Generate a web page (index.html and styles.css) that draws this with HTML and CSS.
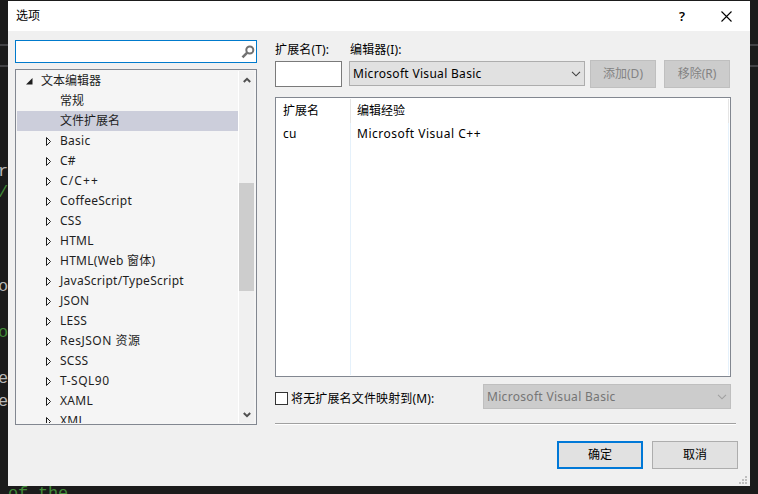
FILE: index.html
```html
<!DOCTYPE html>
<html lang="zh-CN">
<head>
<meta charset="utf-8">
<title>选项</title>
<link rel="stylesheet" href="styles.css">
</head>
<body>
<div class="desktop">
  <div class="editor">
    <div class="rule rule-top"></div>
    <div class="rule rule-bottom"></div>
    <span class="code c1">r</span>
    <span class="code c2 comment">/</span>
    <span class="code c3">o</span>
    <span class="code c4 comment">o</span>
    <span class="code c5">e</span>
    <span class="code c6">e</span>
    <span class="code c7 comment">of the</span>
  </div>
  <main class="dialog">
    <header class="titlebar">
      <span class="title">选项</span>
      <span class="help">?</span>
      <svg class="close" width="11" height="11" viewBox="0 0 11 11"><path d="M.5.5l10 10M10.500.500l-10 10"/></svg>
    </header>
    <div class="content">
      <aside class="left">
        <div class="search">
          <svg width="14" height="14" viewBox="0 0 14 14"><circle cx="8.800" cy="5" r="3.500"/><path d="M6.200 7.600L1.500 12.300"/></svg>
        </div>
        <div class="tree">
          <ul class="items">
            <li class="root"><svg width="7" height="7" viewBox="0 0 7 7"><path class="solid" d="M6.500 0v6.500H0z"/></svg><span class="cjk">文本编辑器</span></li>
            <li class="leaf"><span class="cjk">常规</span></li>
            <li class="leaf selected"><span class="cjk">文件扩展名</span></li>
            <li><svg width="6" height="9" viewBox="0 0 6 9"><path d="M.5.5v8l4-4z"/></svg><span>Basic</span></li>
            <li><svg width="6" height="9" viewBox="0 0 6 9"><path d="M.5.5v8l4-4z"/></svg><span>C#</span></li>
            <li><svg width="6" height="9" viewBox="0 0 6 9"><path d="M.5.5v8l4-4z"/></svg><span class="wide">C/C++</span></li>
            <li><svg width="6" height="9" viewBox="0 0 6 9"><path d="M.5.5v8l4-4z"/></svg><span>CoffeeScript</span></li>
            <li><svg width="6" height="9" viewBox="0 0 6 9"><path d="M.5.5v8l4-4z"/></svg><span>CSS</span></li>
            <li><svg width="6" height="9" viewBox="0 0 6 9"><path d="M.5.5v8l4-4z"/></svg><span>HTML</span></li>
            <li><svg width="6" height="9" viewBox="0 0 6 9"><path d="M.5.5v8l4-4z"/></svg><span>HTML(Web 窗体)</span></li>
            <li><svg width="6" height="9" viewBox="0 0 6 9"><path d="M.5.5v8l4-4z"/></svg><span>JavaScript/TypeScript</span></li>
            <li><svg width="6" height="9" viewBox="0 0 6 9"><path d="M.5.5v8l4-4z"/></svg><span>JSON</span></li>
            <li><svg width="6" height="9" viewBox="0 0 6 9"><path d="M.5.5v8l4-4z"/></svg><span>LESS</span></li>
            <li><svg width="6" height="9" viewBox="0 0 6 9"><path d="M.5.5v8l4-4z"/></svg><span class="medium">ResJSON 资源</span></li>
            <li><svg width="6" height="9" viewBox="0 0 6 9"><path d="M.5.5v8l4-4z"/></svg><span>SCSS</span></li>
            <li><svg width="6" height="9" viewBox="0 0 6 9"><path d="M.5.5v8l4-4z"/></svg><span class="medium">T-SQL90</span></li>
            <li><svg width="6" height="9" viewBox="0 0 6 9"><path d="M.5.5v8l4-4z"/></svg><span>XAML</span></li>
            <li><svg width="6" height="9" viewBox="0 0 6 9"><path d="M.5.5v8l4-4z"/></svg><span>XML</span></li>
          </ul>
          <div class="scrollbar">
            <svg class="arrow" width="8" height="6" viewBox="0 0 8 6"><path d="M.8 5L4 1.800 7.200 5"/></svg>
            <div class="thumb"></div>
            <svg class="arrow down" width="8" height="6" viewBox="0 0 8 6"><path d="M.8 1L4 4.200 7.200 1"/></svg>
          </div>
        </div>
      </aside>
      <section class="right">
        <div class="labels"><span>扩展名(T):</span><span>编辑器(I):</span></div>
        <div class="fields">
          <div class="input"></div>
          <div class="select"><span>Microsoft Visual Basic</span><svg width="10" height="6" viewBox="0 0 10 6"><path d="M1 .8l4 4 4-4"/></svg></div>
          <div class="button small disabled add">添加(D)</div>
          <div class="button small disabled">移除(R)</div>
        </div>
        <div class="list">
          <div class="column ext"><div class="head">扩展名</div><div class="cell">cu</div></div>
          <div class="column exp"><div class="head">编辑经验</div><div class="cell medium">Microsoft Visual C++</div></div>
        </div>
        <div class="mapping">
          <div class="checkbox"></div>
          <span>将无扩展名文件映射到(M):</span>
          <div class="select disabled"><span>Microsoft Visual Basic</span><svg width="10" height="6" viewBox="0 0 10 6"><path d="M1 .8l4 4 4-4"/></svg></div>
        </div>
        <div class="separator"></div>
        <footer class="actions">
          <div class="button primary">确定</div>
          <div class="button">取消</div>
        </footer>
      </section>
    </div>
    <svg class="grip" width="8" height="8" viewBox="0 0 8 8"><path d="M6 0h2v2H6zM3 3h2v2H3zM6 3h2v2H6zM0 6h2v2H0zM3 6h2v2H3zM6 6h2v2H6z"/></svg>
  </main>
</div>
</body>
</html>
```
FILE: styles.css
```css
* { box-sizing: border-box; }
body {
  margin: 0;
  font: 12px/20px "Noto Sans", "Noto Sans CJK SC", sans-serif;
  color: #000;
}
svg { display: block; flex: none; fill: none; }
.desktop {
  position: relative;
  width: 758px;
  height: 494px;
  padding: 1px 8px 8px;
  background: #1b1b1b;
  overflow: hidden;
}
.editor { position: absolute; inset: 0; }
.rule { position: absolute; left: 0; right: 0; height: 2px; background: #424245; }
.rule-top { top: 44px; }
.rule-bottom { top: 65px; }
.code {
  position: absolute;
  font: 17px/20px "Liberation Mono", monospace;
  color: #b8b8b8;
  white-space: pre;
}
.comment { color: #418a38; }
.c1 { left: -2px; top: 162px; }
.c2 { left: -2px; top: 183px; }
.c3 { left: -2px; top: 277px; }
.c4 { left: -2px; top: 323px; }
.c5 { left: -2px; top: 369px; }
.c6 { left: -2px; top: 392px; }
.c7 { left: 8px; top: 484px; letter-spacing: -.2px; }
.dialog {
  position: relative;
  display: flex;
  flex-direction: column;
  width: 742px;
  height: 485px;
  background: #f0f0f0;
}
.titlebar {
  display: flex;
  align-items: center;
  height: 30px;
  padding: 0 18px 0 8px;
  background: #fff;
}
.title { flex: 1; }
.help { margin-right: 36px; font-size: 13px; font-weight: 600; }
.close { stroke: #000; stroke-width: 1.1; }
.content { display: flex; gap: 18px; padding: 9px 12px 0 7px; }
.left { width: 242px; }
.search {
  display: flex;
  align-items: center;
  justify-content: flex-end;
  height: 23px;
  padding-right: 1px;
  border: 1px solid #007acc;
  background: #fff;
}
.search circle { stroke: #717171; stroke-width: 2; }
.search path { stroke: #717171; stroke-width: 2.6; }
.tree {
  display: flex;
  justify-content: space-between;
  height: 356px;
  margin-top: 6px;
  padding: 1px;
  border: 1px solid #828790;
  background: #f5f5f5;
}
.items {
  width: 221px;
  margin: 0;
  padding: 0;
  overflow: hidden;
  list-style: none;
  color: #1e1e1e;
  letter-spacing: .27px;
}
.items .cjk { letter-spacing: 0; }
.items .medium { letter-spacing: .5px; }
.items .wide { letter-spacing: 1.1px; }
.items li {
  display: flex;
  align-items: center;
  height: 20px;
  padding-left: 29px;
  gap: 8px;
  white-space: nowrap;
}
.items li svg { stroke: #1e1e1e; margin-top: 1px; }
.items .root { padding-left: 9px; }
.items .leaf { padding-left: 43px; }
.items .selected { background: #cccedb; }
.items .solid { fill: #1e1e1e; stroke: none; }
.scrollbar {
  display: flex;
  flex-direction: column;
  align-items: center;
  width: 15px;
  margin-right: 1px;
  background: #f0f0f0;
  box-shadow: -1px 0 #fff;
}
.arrow { margin-top: 6px; stroke: #505050; stroke-width: 2; }
.thumb { width: 15px; height: 108px; margin-top: 100px; background: #cdcdcd; }
.down { margin: auto 0 5px; }
.right { width: 463px; }
.labels { display: flex; height: 21px; line-height: 19px; }
.labels span:first-child { width: 75px; }
.labels span, .mapping > span { letter-spacing: .15px; }
.fields { display: flex; align-items: center; height: 26px; }
.input {
  width: 67px;
  height: 26px;
  margin-right: 7px;
  border: 1px solid #7a7a7a;
  background: #fff;
}
.select {
  display: flex;
  align-items: center;
  justify-content: space-between;
  width: 236px;
  height: 25px;
  padding: 0 3px;
  border: 1px solid #adadad;
  background: #e1e1e1;
  letter-spacing: .31px;
  white-space: nowrap;
}
.fields .select { align-self: flex-start; }
.select svg { stroke: #404040; stroke-width: 1.1; }
.button {
  display: flex;
  align-items: center;
  justify-content: center;
  width: 86px;
  height: 28px;
  border: 1px solid #adadad;
  background: #e1e1e1;
  white-space: nowrap;
}
.primary { border: 2px solid #0078d7; }
.disabled { border-color: #bfbfbf; background: #ccc; color: #838383; }
.select.disabled { color: #757575; }
.select.disabled svg { stroke: #a0a0a0; }
.small { flex: none; width: 66px; }
.add { margin: 0 8px 0 5px; }
.list {
  display: flex;
  width: 456px;
  height: 280px;
  margin-top: 10px;
  padding: 1px 1px 1px 0;
  border: 1px solid #828790;
  background: #fff;
}
.column { flex: none; border-right: 1px solid #e5f1fb; }
.ext { width: 75px; padding-left: 7px; }
.exp { width: 378px; padding-left: 6px; }
.head { height: 24px; line-height: 24px; border-right: 1px solid #e5e5e5; margin-right: -1px; }
.cell { line-height: 22px; letter-spacing: .27px; }
.cell.medium { letter-spacing: .5px; }
.mapping { display: flex; align-items: center; width: 456px; height: 25px; margin-top: 7px; white-space: nowrap; }
.mapping > span { margin-top: 4px; }
.mapping .select { width: 248px; margin-left: auto; }
.checkbox { width: 13px; height: 13px; margin: 4px 3px 0 0; border: 1px solid #333; background: #fff; }
.separator { width: 461px; height: 2px; margin-top: 14px; background: #a0a0a0; border-bottom: 1px solid #fff; }
.actions { display: flex; justify-content: flex-end; gap: 9px; margin-top: 16px; }
.grip { position: absolute; right: 3px; bottom: 2px; fill: #bfbfbf; }
```
